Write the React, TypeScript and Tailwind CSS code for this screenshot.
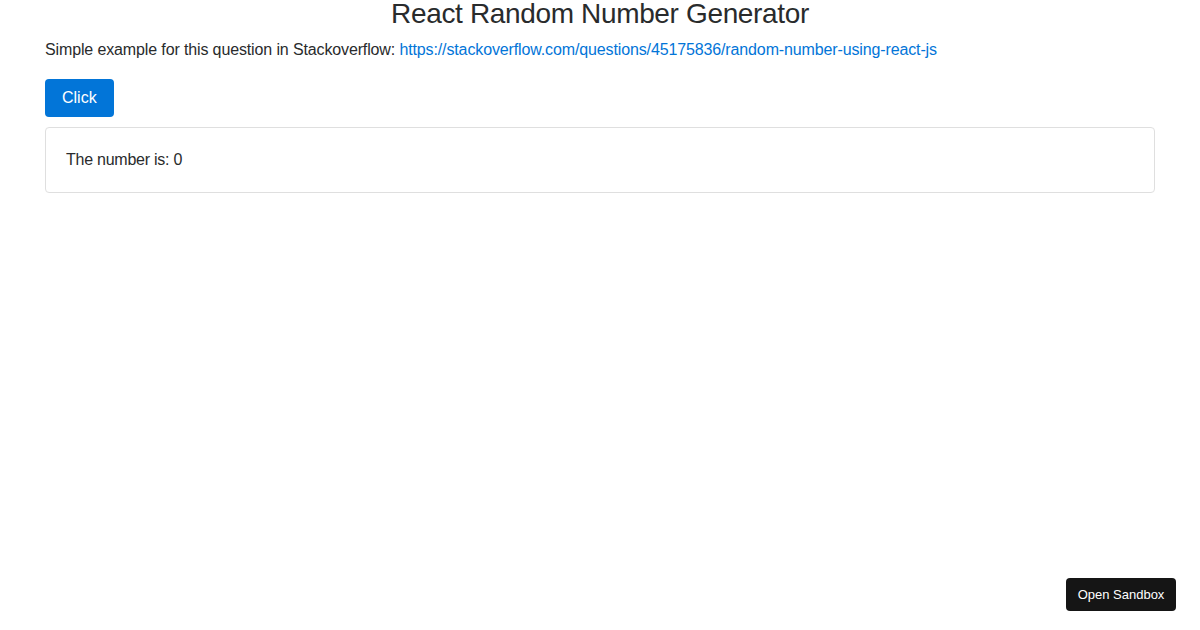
import React, { useState } from "react";

export default function App() {
  const [n, setN] = useState(0);
  return (
    <div className="min-h-[630px] w-full bg-white relative text-[#292b2c]" style={{ fontFamily: '"Liberation Sans", Arial, sans-serif' }}>
      <div className="mx-auto max-w-[1140px] px-[15px]">
        <h1 className="text-center text-[28px] leading-[28px] tracking-[-0.35px] font-normal mb-[10px]">React Random Number Generator</h1>
        <p className="text-base leading-6 tracking-[-0.13px] mb-4">
          Simple example for this question in Stackoverflow:{" "}
          <a className="text-[#0275d8]" href="#">https://stackoverflow.com/questions/45175836/random-number-using-react-js</a>
        </p>
        <button
          onClick={() => setN(Math.floor(Math.random() * 100))}
          className="mt-px h-[38px] px-[17px] rounded-[4px] bg-[#0275d8] text-white text-base leading-6"
        >
          Click
        </button>
        <div className="mt-[10px] border border-[#dfdfdf] rounded-[4px] p-5">
          <p className="text-base leading-6 tracking-[-0.25px]">The number is: {n}</p>
        </div>
      </div>
      <button className="absolute right-[24px] bottom-[19px] h-[33px] w-[110px] rounded-[4px] bg-[#151515] text-white text-[13px]">
        Open Sandbox
      </button>
    </div>
  );
}
